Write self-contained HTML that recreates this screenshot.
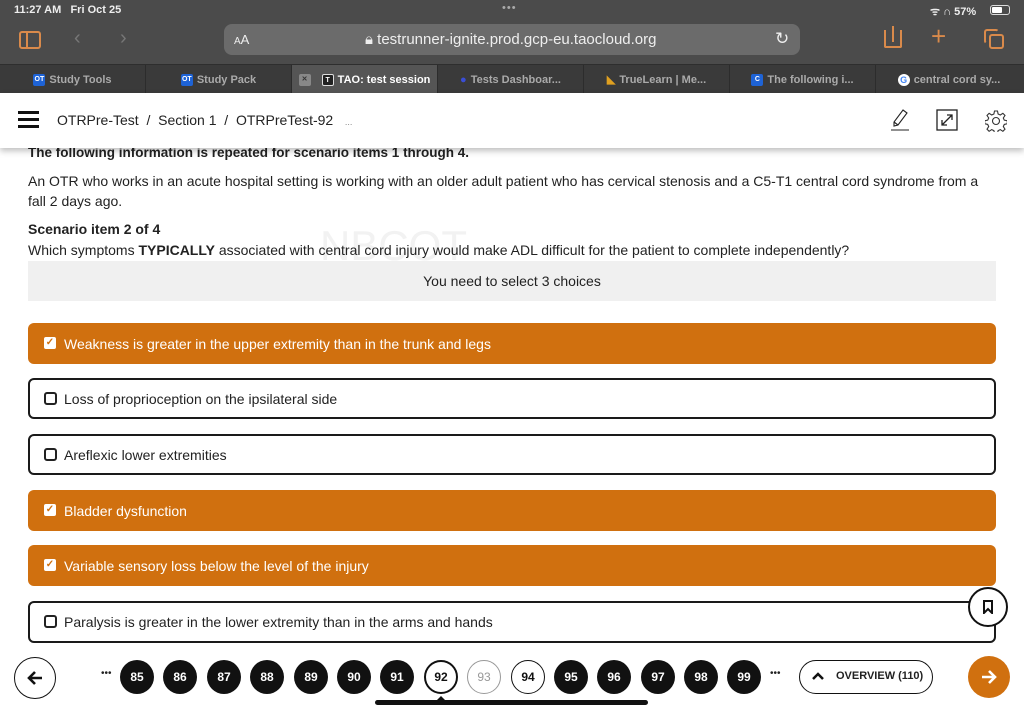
<!DOCTYPE html>
<html><head><meta charset="utf-8"><style>
*{margin:0;padding:0;box-sizing:border-box}
body{width:1024px;height:710px;overflow:hidden;background:#fff;font-family:"Liberation Sans",sans-serif;position:relative;color:#222}
.a{position:absolute}
.top{left:0;top:0;width:1024px;height:64px;background:#4b4b4b}
.tabs{left:0;top:64px;width:1024px;height:29px;background:#3a3a3a;border-top:1px solid #2e2e2e}
.tab{position:absolute;top:0;height:29px;width:146px;border-right:1px solid #2c2c2c;color:#aaa;font-size:11px;font-weight:bold;display:flex;align-items:center;justify-content:center;gap:4px}
.ic{display:inline-block;width:12px;height:12px;border-radius:2px;background:#1e63d6;color:#fff;font-size:7px;text-align:center;line-height:12px}
.hdr{left:0;top:93px;width:1024px;height:55px;background:#fff;box-shadow:0 3px 6px rgba(0,0,0,.25);z-index:3}
.opt{position:absolute;left:28px;width:968px;height:41px;border-radius:6px;font-size:14px;display:flex;align-items:center;padding-left:36px}
.on{background:#d0700f;color:#fff}
.off{border:2px solid #1a1a1a;color:#222;padding-left:34px}
.cb{position:absolute;left:16px;top:14px;width:12px;height:12px;border-radius:2px}
.on .cb{background:#fff;color:#d0700f;font-size:10px;font-weight:bold;line-height:12px;text-align:center}
.off .cb{border:2px solid #222;left:14px;top:12px;width:13px;height:13px;border-radius:3px}
.n{position:absolute;top:660px;width:34px;height:34px;border-radius:50%;background:#111;color:#fff;font-size:12px;font-weight:bold;display:flex;align-items:center;justify-content:center}
</style></head><body>
<div class="a top"></div>
<div class="a" style="left:14px;top:4px;color:#eee;font-size:11px;font-weight:bold">11:27 AM&nbsp;&nbsp; Fri Oct 25</div>
<div class="a" style="left:502px;top:2px;color:#aaa;font-size:11px;letter-spacing:1px">•••</div>
<div class="a" style="left:930px;top:4px;color:#eee;font-size:11px;font-weight:bold">ᯤ ∩ 57%</div>
<div class="a" style="left:990px;top:5px;width:20px;height:10px;border:1px solid #ddd;border-radius:3px"><div style="width:10px;height:6px;margin:1px;background:#fff;border-radius:1px"></div></div>
<div class="a" style="left:19px;top:31px;width:22px;height:18px;border:2px solid #d98a4b;border-radius:3px"><div style="width:7px;height:14px;border-right:2px solid #d98a4b"></div></div>
<div class="a" style="left:74px;top:27px;color:#777;font-size:20px">‹</div>
<div class="a" style="left:120px;top:27px;color:#777;font-size:20px">›</div>
<div class="a" style="left:224px;top:24px;width:576px;height:31px;background:#6b6b6b;border-radius:8px"></div>
<div class="a" style="left:234px;top:32px;color:#eee;font-size:13px"><span style="font-size:10px">A</span>A</div>
<div class="a" style="left:365px;top:31px;color:#eee;font-size:15px">🔒︎ testrunner-ignite.prod.gcp-eu.taocloud.org</div>
<div class="a" style="left:775px;top:29px;color:#eee;font-size:17px">↻</div>
<div class="a" style="left:884px;top:30px;width:18px;height:18px;border:2px solid #d98a4b;border-top:none;border-radius:0 0 2px 2px"></div>
<div class="a" style="left:892px;top:26px;width:2px;height:16px;background:#d98a4b"></div>
<div class="a" style="left:931px;top:21px;color:#d98a4b;font-size:26px;font-weight:300">+</div>
<div class="a" style="left:989px;top:34px;width:15px;height:15px;border:2px solid #d98a4b;border-radius:3px"></div>
<div class="a" style="left:984px;top:29px;width:15px;height:15px;border:2px solid #d98a4b;border-radius:3px;border-right-color:transparent;border-bottom-color:transparent"></div>
<div class="a tabs">
<div class="tab" style="left:0"><span class="ic">OT</span>Study Tools</div>
<div class="tab" style="left:146px"><span class="ic">OT</span>Study Pack</div>
<div class="tab" style="left:292px;background:#555;color:#fff"><span class="ic" style="background:#888;color:#333">✕</span>&nbsp;<span class="ic" style="background:#222;border:1px solid #ddd">T</span>TAO: test session</div>
<div class="tab" style="left:438px"><span style="color:#3a4ed6">●</span>Tests Dashboar...</div>
<div class="tab" style="left:584px"><span style="color:#e0a020">◣</span>TrueLearn | Me...</div>
<div class="tab" style="left:730px"><span class="ic">C</span>The following i...</div>
<div class="tab" style="left:876px;border:none"><span class="ic" style="background:#fff;color:#4285f4;border-radius:50%;font-size:9px">G</span>central cord sy...</div>
</div>
<div class="a hdr">
<div class="a" style="left:18px;top:18px;width:21px;height:3px;background:#111;box-shadow:0 7px 0 #111,0 14px 0 #111"></div>
<div class="a" style="left:57px;top:19px;font-size:14px;color:#222">OTRPre-Test &nbsp;/&nbsp; Section 1 &nbsp;/&nbsp; OTRPreTest-92 &nbsp;&nbsp;<span style="font-size:9px;color:#888">...</span></div>
<svg class="a" style="left:888px;top:14px" width="24" height="26" viewBox="0 0 24 26" fill="none" stroke="#222" stroke-width="1.1"><path d="M15 3l4 3-9 12-4 1 0-4z M6 15l4 3 M3 23h18"/></svg>
<svg class="a" style="left:936px;top:16px" width="22" height="22" viewBox="0 0 22 22" fill="none" stroke="#222" stroke-width="1.3"><rect x="1" y="1" width="20" height="20"/><path d="M6 16l10-10M11 6h5v5M6 11v5h5"/></svg>
<svg class="a" style="left:985px;top:17px" width="22" height="22" viewBox="0 0 22 22" fill="none" stroke="#333" stroke-width="1.1"><path d="M9.5 1h3l.6 3 2.2 1 2.6-1.7 2.1 2.1-1.7 2.6 1 2.2 3 .6v3l-3 .6-1 2.2 1.7 2.6-2.1 2.1-2.6-1.7-2.2 1-.6 3h-3l-.6-3-2.2-1-2.6 1.7-2.1-2.1 1.7-2.6-1-2.2-3-.6v-3l3-.6 1-2.2-1.7-2.6 2.1-2.1 2.6 1.7 2.2-1z"/><circle cx="11" cy="11" r="3.5"/></svg>
</div>
<div class="a" style="left:28px;top:145px;font-size:13.5px;font-weight:bold;color:#222">The following information is repeated for scenario items 1 through 4.</div>
<div class="a" style="left:28px;top:171px;width:962px;font-size:14px;line-height:20px">An OTR who works in an acute hospital setting is working with an older adult patient who has cervical stenosis and a C5-T1 central cord syndrome from a fall 2 days ago.</div>
<div class="a" style="left:28px;top:221px;font-size:14px;font-weight:bold">Scenario item 2 of 4</div>
<div class="a" style="left:28px;top:242px;font-size:14px">Which symptoms <b>TYPICALLY</b> associated with central cord injury would make ADL difficult for the patient to complete independently?</div>
<div class="a" style="left:320px;top:222px;font-size:42px;color:#f2f2f2;z-index:-1">NBCOT</div>
<div class="a" style="left:28px;top:261px;width:968px;height:40px;background:#f0f0f0;font-size:14px;text-align:center;line-height:40px">You need to select 3 choices</div>
<div class="opt on" style="top:323px"><span class="cb">✓</span>Weakness is greater in the upper extremity than in the trunk and legs</div>
<div class="opt off" style="top:378px"><span class="cb"></span>Loss of proprioception on the ipsilateral side</div>
<div class="opt off" style="top:434px"><span class="cb"></span>Areflexic lower extremities</div>
<div class="opt on" style="top:490px"><span class="cb">✓</span>Bladder dysfunction</div>
<div class="opt on" style="top:545px"><span class="cb">✓</span>Variable sensory loss below the level of the injury</div>
<div class="opt off" style="top:601px;height:42px"><span class="cb"></span>Paralysis is greater in the lower extremity than in the arms and hands</div>
<div class="a" style="left:968px;top:587px;width:40px;height:40px;border-radius:50%;border:2px solid #111;background:#fff;display:flex;align-items:center;justify-content:center"><svg width="12" height="14" viewBox="0 0 12 14" fill="none" stroke="#111" stroke-width="2"><path d="M2 1h8v12l-4-4-4 4z"/></svg></div>
<div class="a" style="left:0;top:644px;width:1024px;height:66px;background:#fff"></div>
<div class="a" style="left:14px;top:657px;width:42px;height:42px;border-radius:50%;border:1.5px solid #111;display:flex;align-items:center;justify-content:center"><svg width="18" height="16" viewBox="0 0 18 16" fill="none" stroke="#111" stroke-width="2.6"><path d="M16 8H3M9 2L3 8l6 6"/></svg></div>
<div class="a" style="left:101px;top:668px;font-size:10px">•••</div>
<div class="n" style="left:120px">85</div><div class="n" style="left:163px">86</div><div class="n" style="left:207px">87</div><div class="n" style="left:250px">88</div><div class="n" style="left:294px">89</div><div class="n" style="left:337px">90</div><div class="n" style="left:380px">91</div>
<div class="n" style="left:424px;background:#fff;color:#111;border:2px solid #111">92</div>
<div class="n" style="left:467px;background:#fff;color:#999;border:1px solid #999;font-weight:normal">93</div>
<div class="n" style="left:511px;background:#fff;color:#111;border:1.5px solid #111">94</div>
<div class="n" style="left:554px">95</div><div class="n" style="left:597px">96</div><div class="n" style="left:641px">97</div><div class="n" style="left:684px">98</div><div class="n" style="left:727px">99</div>
<div class="a" style="left:770px;top:668px;font-size:10px">•••</div>
<div class="a" style="left:799px;top:660px;width:134px;height:34px;border:1.5px solid #111;border-radius:17px;font-size:11px;font-weight:bold;line-height:31px;padding-left:36px">OVERVIEW (110)</div>
<svg class="a" style="left:811px;top:671px" width="14" height="10" viewBox="0 0 14 10" fill="none" stroke="#111" stroke-width="2.5"><path d="M2 8l5-5 5 5"/></svg>
<div class="a" style="left:968px;top:656px;width:42px;height:42px;border-radius:50%;background:#d0700f;display:flex;align-items:center;justify-content:center"><svg width="18" height="16" viewBox="0 0 18 16" fill="none" stroke="#fff" stroke-width="2.6"><path d="M2 8h13M9 2l6 6-6 6"/></svg></div>
<div class="a" style="left:375px;top:700px;width:273px;height:5px;background:#111;border-radius:3px"></div>
<div class="a" style="left:437px;top:696px;width:0;height:0;border-left:4px solid transparent;border-right:4px solid transparent;border-bottom:4px solid #111"></div>
</body></html>
